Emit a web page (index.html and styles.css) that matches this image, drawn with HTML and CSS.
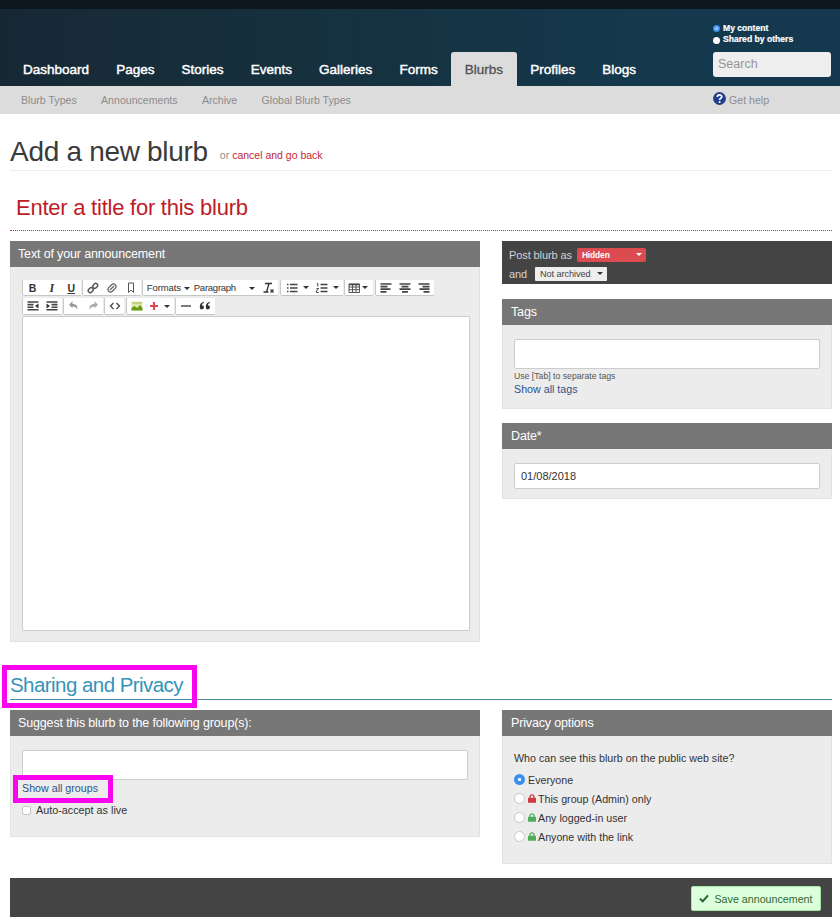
FILE: index.html
```html
<!DOCTYPE html>
<html lang="en">
<head>
<meta charset="utf-8">
<title>Add a new blurb</title>
<link rel="stylesheet" href="styles.css">
</head>
<body>
<header class="top">
  <nav class="nav">
    <a>Dashboard</a><a>Pages</a><a>Stories</a><a>Events</a><a>Galleries</a><a>Forms</a><a class="active">Blurbs</a><a>Profiles</a><a>Blogs</a>
  </nav>
  <div class="search">
    <label><input type="radio" name="scope" checked><span>My content</span></label>
    <label><input type="radio" name="scope"><span>Shared by others</span></label>
    <input class="query" type="text" placeholder="Search">
  </div>
</header>
<div class="subnav">
  <nav><a>Blurb Types</a><a>Announcements</a><a>Archive</a><a>Global Blurb Types</a></nav>
  <a class="help"><svg width="13" height="13" viewBox="0 0 13 13"><circle cx="6.5" cy="6.5" r="6.4" fill="#213f8c"/><path d="M4.3 5C4.3 2.3 8.8 2.3 8.8 4.8C8.8 6.3 6.6 6.2 6.6 8" fill="none" stroke="#fff" stroke-width="1.7"/><circle cx="6.6" cy="9.9" r="1" fill="#fff"/></svg><span>Get help</span></a>
</div>
<main>
  <div class="title"><h1>Add a new blurb</h1><p>or <a>cancel and go back</a></p></div>
  <h2 class="entry">Enter a title for this blurb</h2>
  <div class="cols first">
    <section class="panel text">
      <h3>Text of your announcement</h3>
      <div class="editor">
        <div class="bar">
          <div class="grp"><b class="ic">B</b><b class="ic ital">I</b><b class="ic under">U</b></div>
          <div class="grp">
            <span class="ic"><svg width="12" height="12" viewBox="0 0 12 12"><g fill="none" stroke="#555" stroke-width="1.4"><rect x="-2.7" y="-2" width="5.4" height="4" rx="2" transform="translate(3.7 8.2) rotate(-45)"/><rect x="-2.7" y="-2" width="5.4" height="4" rx="2" transform="translate(8.2 3.8) rotate(-45)"/></g></svg></span>
            <span class="ic"><svg width="12" height="12" viewBox="0 0 12 12"><g fill="none" stroke="#666" stroke-width="1.3"><rect x="-4.7" y="-2.6" width="9.4" height="5.2" rx="2.6" transform="translate(6 6) rotate(-45)"/><path d="M4 8L8 4"/></g></svg></span>
            <span class="ic"><svg width="8" height="12" viewBox="0 0 8 12"><path d="M1.5 1h5v9.5L4 8l-2.500 2.500z" fill="none" stroke="#555"/></svg></span>
          </div>
          <div class="grp wide"><span class="dd formats">Formats<i class="caret"></i></span><span class="dd para">Paragraph<i class="caret"></i></span><span class="ic"><svg width="13" height="12" viewBox="0 0 13 12"><path d="M3 1.500h7M7 1.500L4.700 9.500M1.500 10h5M8.500 7.500l3 3M11.500 7.500l-3 3" fill="none" stroke="#333" stroke-width="1.300"/></svg></span></div>
          <div class="grp lists">
            <span class="drop"><svg width="12" height="12" viewBox="0 0 12 12"><path d="M1 2.500h1.500M1 6h1.500M1 9.500h1.500M4 2.500h7.500M4 6h7.500M4 9.500h7.500" stroke="#444" stroke-width="1.400"/></svg><i class="caret"></i></span>
            <span class="drop"><svg width="12" height="12" viewBox="0 0 12 12"><path d="M4.500 2.500h7M4.500 6h7M4.500 9.500h7" stroke="#444" stroke-width="1.400"/><path d="M.8 1.500h1v3M.5 6.500h2l-2 2.500v1.500h2.200" fill="none" stroke="#444"/></svg><i class="caret"></i></span>
          </div>
          <div class="grp table"><span class="drop"><svg width="12" height="12" viewBox="0 0 12 12"><path d="M1 2h10.500v8.500H1zM1 5h10.500M1 7.700h10.500M4.500 2v8.500M8 2v8.500" fill="none" stroke="#555"/><path d="M1 2.500h10.500" stroke="#444" stroke-width="1.500"/></svg><i class="caret"></i></span></div>
          <div class="grp align">
            <span class="ic"><svg width="12" height="12" viewBox="0 0 12 12"><path d="M.5 2h11M.5 4.600h7M.5 7.200h10M.5 9.800h6" stroke="#444" stroke-width="1.700"/></svg></span>
            <span class="ic"><svg width="12" height="12" viewBox="0 0 12 12"><path d="M.5 2h11M2.500 4.600h7M.5 7.200h11M3 9.800h6" stroke="#444" stroke-width="1.700"/></svg></span>
            <span class="ic"><svg width="12" height="12" viewBox="0 0 12 12"><path d="M.5 2h11M4.500 4.600h7M1.500 7.200h10M5.500 9.800h6" stroke="#444" stroke-width="1.700"/></svg></span>
          </div>
        </div>
        <div class="bar second">
          <div class="grp">
            <span class="ic"><svg width="12" height="12" viewBox="0 0 12 12"><path d="M.5 2h11M.5 4.600h6M.5 7.200h6M.5 9.800h11" stroke="#444" stroke-width="1.600"/><path d="M11.500 3.500v5L8 6z" fill="#333"/></svg></span>
            <span class="ic"><svg width="12" height="12" viewBox="0 0 12 12"><path d="M.5 2h11M5.500 4.600h6M5.500 7.200h6M.5 9.800h11" stroke="#444" stroke-width="1.600"/><path d="M.5 3.500v5L4 6z" fill="#333"/></svg></span>
          </div>
          <div class="grp">
            <span class="ic"><svg width="12" height="12" viewBox="0 0 12 12"><path d="M4.500 1v3c4 0 5.500 2 4.500 6-.5-3-2-3.500-4.500-3.500V8L1 5z" fill="#999"/></svg></span>
            <span class="ic"><svg width="12" height="12" viewBox="0 0 12 12"><path d="M7.500 1v3C3.500 4 2 6 3 10c.5-3 2-3.500 4.500-3.500V8L11 5z" fill="#aaa"/></svg></span>
          </div>
          <div class="grp"><span class="ic"><svg width="12" height="12" viewBox="0 0 12 12"><path d="M4.500 3L1.500 6l3 3M7.500 3l3 3-3 3" fill="none" stroke="#444" stroke-width="1.300"/></svg></span></div>
          <div class="grp media">
            <span class="ic"><svg width="12" height="12" viewBox="0 0 12 12"><path d="M.5 1.500h11v9H.5z" fill="#dfe8a4"/><path d="M1 3h10" stroke="#a9b960"/><path d="M.5 10.500V8l3-2 2.500 2 3-3 2.500 3v2.500z" fill="#679b19"/></svg></span>
            <span class="drop plus"><svg width="10" height="12" viewBox="0 0 10 12"><path d="M1 6h8M5 2v8" stroke="#dd4b55" stroke-width="2.200"/></svg><i class="caret"></i></span>
          </div>
          <div class="grp">
            <span class="ic"><svg width="12" height="12" viewBox="0 0 12 12"><path d="M1 6h10" stroke="#333" stroke-width="1.300"/></svg></span>
            <span class="ic"><svg width="12" height="12" viewBox="0 0 12 12"><path d="M5 2C2 2.200.8 4 .8 7.200a2.100 2.100 0 1 0 2-2C3 4 3.700 3.300 5 3zM11 2C8 2.200 6.800 4 6.800 7.200a2.100 2.100 0 1 0 2-2C9 4 9.700 3.300 11 3z" fill="#333"/></svg></span>
          </div>
        </div>
        <div class="canvas"></div>
      </div>
    </section>
    <aside>
      <div class="status">
        <div>Post blurb as <span class="sel hidden">Hidden<i class="caret"></i></span></div>
        <div>and <span class="sel archived">Not archived<i class="caret"></i></span></div>
      </div>
      <section class="panel tags"><h3>Tags</h3><div class="body"><input class="field" type="text"><small>Use [Tab] to separate tags</small><a class="link">Show all tags</a></div></section>
      <section class="panel date"><h3>Date*</h3><div class="body"><input class="field" type="text" value="01/08/2018"></div></section>
    </aside>
  </div>
  <h2 class="sharing"><span>Sharing and Privacy</span><i class="mark mark-title"></i></h2>
  <div class="cols">
    <section class="panel suggest"><h3>Suggest this blurb to the following group(s):</h3>
      <div class="body"><input class="field" type="text"><a class="link">Show all groups<i class="mark mark-link"></i></a><label class="auto"><input type="checkbox"><span>Auto-accept as live</span></label></div>
    </section>
    <section class="panel privacy"><h3>Privacy options</h3>
      <div class="body">
        <p>Who can see this blurb on the public web site?</p>
        <label><input type="radio" name="who" checked><span>Everyone</span></label>
        <label><input type="radio" name="who"><svg class="red" width="8" height="9" viewBox="0 0 8 9"><path d="M2 4V2.800a2 2 0 0 1 4 0V4" fill="none" stroke="currentColor" stroke-width="1.300"/><rect y="3.800" width="8" height="5" rx=".6" fill="currentColor"/></svg><span>This group (Admin) only</span></label>
        <label><input type="radio" name="who"><svg class="green" width="8" height="9" viewBox="0 0 8 9"><path d="M2 4V2.800a2 2 0 0 1 4 0V4" fill="none" stroke="currentColor" stroke-width="1.300"/><rect y="3.800" width="8" height="5" rx=".6" fill="currentColor"/></svg><span>Any logged-in user</span></label>
        <label><input type="radio" name="who"><svg class="green" width="8" height="9" viewBox="0 0 8 9"><path d="M2 4V2.800a2 2 0 0 1 4 0V4" fill="none" stroke="currentColor" stroke-width="1.300"/><rect y="3.800" width="8" height="5" rx=".6" fill="currentColor"/></svg><span>Anyone with the link</span></label>
      </div>
    </section>
  </div>
  <footer><button><svg width="10" height="9" viewBox="0 0 10 9"><path d="M1 4.800l2.700 2.500L9 1.300" fill="none" stroke="#27622a" stroke-width="2"/></svg><span>Save announcement</span></button></footer>
</main>
</body>
</html>
```
FILE: styles.css
```css
* { box-sizing: border-box; }
body { margin: 0; background: #fff; color: #333; font: 11px/14px "Liberation Sans", Arial, sans-serif; }
h1, h2, h3, p { margin: 0; font-weight: 400; }
input { margin: 0; }
svg { display: block; flex: none; }
.top { height: 86px; border-top: 9px solid #0b171c; background: linear-gradient(90deg, #172835 0%, #16303d 35%, #14384c 75%, #14384e 100%); display: flex; justify-content: space-between; align-items: flex-end; padding: 0 9px 0 9.500px; }
.nav { display: flex; height: 34px; }
.nav a { padding: 0 13.550px; font-size: 13.500px; line-height: 35px; color: #fff; -webkit-text-stroke: .45px #fff; letter-spacing: 0; }
.nav a.active { background: #dcdcdc; color: #505050; border-radius: 3px 3px 0 0; -webkit-text-stroke: .3px #505050; }
.search { width: 118px; height: 64px; }
.search label { display: flex; align-items: center; height: 11.500px; color: #fff; font-weight: 700; font-size: 8.600px; gap: 3px; -webkit-text-stroke: .2px #fff; }
.search label input { appearance: none; width: 7px; height: 7px; border-radius: 50%; background: #fff; position: relative; top: 1px; }
.search label input:checked { background: radial-gradient(#8fc0f8 1px, #388ff0 2.500px); }
.query { display: block; margin-top: 7px; width: 118px; height: 25px; border: 0; border-radius: 3px; background: #eee; font: 12.500px "Liberation Sans", sans-serif; padding: 0 5px 1px; }
.query::placeholder { color: #969696; }
.subnav { height: 28px; background: #dcdcdc; color: #8c8c8c; display: flex; justify-content: space-between; align-items: center; padding: 0 9px 0 21px; font-size: 10.600px; }
.subnav nav { display: flex; gap: 24.300px; }
.help { display: flex; gap: 3px; width: 118px; }
.help svg { margin-top: -1px; }
main { padding: 0 8px 0 10px; }
.title { height: 57px; border-bottom: 1px solid #eee; display: flex; align-items: baseline; gap: 12px; padding-top: 20px; }
h1 { font-size: 28px; line-height: 36px; letter-spacing: -.3px; color: #3a3a3a; }
.title p { font-size: 10.500px; color: #8c8c8c; position: relative; top: -2px; }
.title a { color: #c62732; }
.entry { height: 60px; border-bottom: 1px dotted #c4303c; font-size: 22px; line-height: 28px; color: #bd1b28; padding: 23px 6px 0; letter-spacing: -.24px; }
.cols { display: grid; grid-template-columns: 470px 330px; gap: 22px; align-items: start; }
.first { margin-top: 10px; }
.panel { background: #ececec; border: 1px solid #e2e2e2; border-top: 0; }
.panel h3 { margin: 0 -1px; height: 26px; background: #777; color: #fff; font-size: 12.500px; line-height: 26px; padding: 0 8px; letter-spacing: -.15px; }
aside .panel h3, .privacy h3 { padding-left: 9px; }
.text { height: 401px; }
.editor { padding: 13px 9px 0 11px; }
.bar { display: flex; height: 15px; padding-left: 1px; font-size: 9.500px; }
.second { height: 16px; margin-top: 3px; }
.grp { display: flex; align-items: center; background: #fff; margin-right: 2px; box-shadow: 0 1px 0 #c6c6c6, -1px 0 0 #c9c9c9; border-radius: 1px; }
.ic { width: 19.300px; display: flex; align-items: center; justify-content: center; font-size: 10.500px; color: #333; }
.ital { font-style: italic; font-family: "Liberation Serif", serif; font-size: 12px; }
.under { text-decoration: underline; }
.caret { width: 0; height: 0; border: 3px solid transparent; border-top: 3px solid #333; border-bottom: 0; flex: none; }
.dd { display: flex; align-items: center; letter-spacing: -.1px; }
.formats { width: 47px; padding-left: 4px; gap: 3px; }
.formats .caret { margin-top: 2px; }
.para { width: 69px; padding-left: 4px; justify-content: space-between; padding-right: 4px; letter-spacing: -.25px; }
.para .caret { margin-top: 2px; }
.drop { width: 30px; padding-left: 5px; display: flex; align-items: center; gap: 5px; }
.wide { margin-right: 3px; }
.lists { width: 62px; }
.table { width: 28px; }
.table .drop { gap: 2px; padding-left: 3px; }
.align { margin-left: 1px; }
.second .grp { margin-right: 2.500px; }
.media { width: 47px; }
.plus { width: 28px; padding-left: 3px; }
.canvas { margin-top: 2px; height: 315px; background: #fff; border: 1px solid #ccc; border-radius: 1px; }
.status { height: 43px; background: #444; color: #d2d2d2; padding: 4px 7px; font-size: 11px; letter-spacing: -.1px; }
.status div { display: flex; height: 19px; align-items: center; }
.sel { display: flex; align-items: center; justify-content: space-between; height: 14px; padding: 0 4px 0 5px; font-size: 9.500px; line-height: 14px; }
.hidden { width: 69px; margin-left: 5px; background: #dc4b50; color: #fff; border-radius: 2px; font-weight: 700; font-size: 8.400px; }
.hidden .caret { border-top-color: #fff; }
.archived { width: 72px; margin-left: 8px; background: #eee; color: #444; border-radius: 1px; font-size: 9.200px; }
.field { display: block; width: 100%; height: 30px; border: 1px solid #ccc; border-radius: 2px; background: #fff; padding: 0 6px; font: 11px "Liberation Sans", sans-serif; color: #333; outline: 0; }
.body { padding: 14px 11px 0 11px; }
.tags { height: 110px; margin-top: 15px; }
.tags small { display: block; font-size: 8.700px; line-height: 12px; color: #555; margin-top: 1px; }
.link { display: block; width: max-content; color: #2c5389; position: relative; font-size: 10.700px; line-height: 14px; }
.date { height: 76px; margin-top: 14px; }
.date .field { height: 26px; }
.sharing { margin-top: 28px; height: 30px; border-bottom: 1px solid #4b8d9e; color: #3494b8; font-size: 20.500px; line-height: 30px; margin-bottom: 10px; position: relative; letter-spacing: -.55px; }
.mark { position: absolute; border: 5px solid #fb05ee; }
.mark-title { left: -8px; top: -5px; width: 195px; height: 43px; }
.mark-link { left: -9px; top: -6px; width: 100px; height: 28px; }
.suggest { height: 127px; }
.suggest .link { margin-top: 1px; }
.auto { display: flex; align-items: center; gap: 5px; margin-top: 8px; font-size: 10.800px; }
.auto input { appearance: none; width: 9px; height: 9px; background: #fff; border: 1px solid #c4c4c4; border-radius: 2px; }
.privacy { height: 154px; }
.privacy p { line-height: 16px; height: 20px; font-size: 10.700px; }
.privacy label { display: flex; align-items: center; height: 19px; font-size: 10.700px; }
.privacy label input { appearance: none; width: 11px; height: 11px; border: 1px solid #c9c9c9; border-radius: 50%; background: #fff; margin-right: 3px; }
.privacy label input:checked { border: 0; background: radial-gradient(#fff 1.200px, #3990f2 2px); }
.privacy svg { margin-right: 2px; }
.red { color: #cf3a40; }
.green { color: #4fae5b; }
footer { margin-top: 14px; height: 39px; background: #444; display: flex; justify-content: flex-end; padding: 8px 11px; }
button { width: 130px; height: 25px; border: 1px solid #a5e8a5; border-radius: 2px; background: #dcffdc; color: #2f6933; font: 10.700px "Liberation Sans", sans-serif; display: flex; align-items: center; justify-content: center; gap: 5px; padding: 0; white-space: nowrap; }
```
